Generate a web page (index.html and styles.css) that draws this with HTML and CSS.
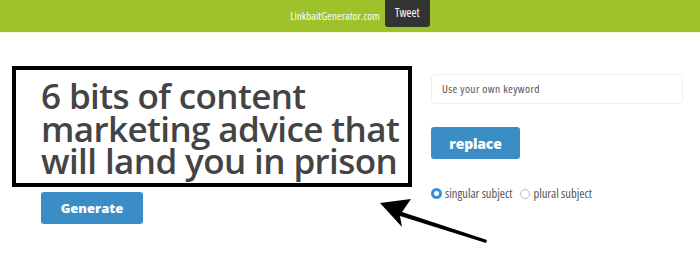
FILE: index.html
```html
<!DOCTYPE html>
<html>
<head>
<meta charset="utf-8">
<link rel="stylesheet" href="styles.css">
</head>
<body>
<header class="topbar">
  <span class="brand">LinkbaitGenerator.com</span>
  <span class="tweet">Tweet</span>
</header>
<main class="main">
  <section class="left">
    <div class="headline-box">
      <h1 class="headline">6 bits of content marketing advice that will land you in prison</h1>
    </div>
    <button class="btn btn-generate">Generate</button>
  </section>
  <section class="right">
    <div class="keyword">Use your own keyword</div>
    <button class="btn btn-replace">replace</button>
    <div class="radios">
      <label class="radio"><span class="dot checked"></span>singular subject</label>
      <label class="radio"><span class="dot"></span>plural subject</label>
    </div>
  </section>
</main>
<svg class="arrow" width="700" height="258" viewBox="0 0 700 258">
  <polygon points="380,203 411,199 402,212 487,240 486,243 400,216 402,227" fill="#000"/>
</svg>
</body>
</html>
```
FILE: styles.css
```css
html, body { margin: 0; padding: 0; background: #fff; }
body { width: 700px; height: 258px; overflow: hidden; position: relative; font-family: "Open Sans", "Liberation Sans", sans-serif; }
.topbar {
  height: 32px;
  background: #9dc22a;
  border-bottom: 1px solid #eef5dc;
  display: flex;
  justify-content: center;
  align-items: flex-start;
  gap: 5px;
  padding-left: 20px;
}
.brand { color: #fff; font-size: 11px; line-height: 31px; font-stretch: 75%; letter-spacing: 0.1px; }
.tweet {
  background: #333;
  color: #fff;
  font-size: 12px;
  font-stretch: 75%;
  height: 27px;
  line-height: 26px;
  width: 45px;
  text-align: center;
  border-radius: 0 0 3px 3px;
}
.main { display: flex; padding-left: 12px; }
.left { width: 400px; padding-top: 33px; }
.headline-box {
  height: 113px;
  border: 4px solid #000;
  padding-left: 25px;
  box-sizing: content-box;
  width: 367px;
}
.headline {
  margin: 0;
  font-size: 35px;
  line-height: 32.5px;
  font-weight: 600;
  color: #444;
  letter-spacing: -0.6px;
  padding-top: 10px;
}
.btn {
  border: none;
  border-radius: 3px;
  background: #3b8dc5;
  color: #fff;
  font-family: "Open Sans", sans-serif;
  font-weight: 800;
  display: block;
  padding: 0;
}
.btn-generate { margin: 5px 0 0 29px; width: 102px; height: 32px; font-size: 13px; }
.right { margin-left: 19px; padding-top: 41px; }
.keyword {
  width: 240px;
  height: 28px;
  border: 1px solid #eee;
  border-radius: 4px;
  padding-left: 10px;
  font-size: 11.5px;
  font-stretch: 75%;
  letter-spacing: 0.4px;
  line-height: 28px;
  color: #555;
}
.btn-replace { margin-top: 23px; width: 89px; height: 32px; font-size: 14px; letter-spacing: -0.2px; }
.radios { display: flex; gap: 8px; margin-top: 26px; font-size: 12.5px; font-stretch: 75%; color: #555; }
.radio { display: flex; align-items: center; gap: 3px; }
.dot { width: 10px; height: 10px; border: 1px solid #bbb; border-radius: 50%; box-sizing: border-box; }
.dot.checked { border: 3px solid #3b8dd8; background: #fff; width: 11px; height: 11px; }
.arrow { position: absolute; left: 0; top: 0; pointer-events: none; }
```
